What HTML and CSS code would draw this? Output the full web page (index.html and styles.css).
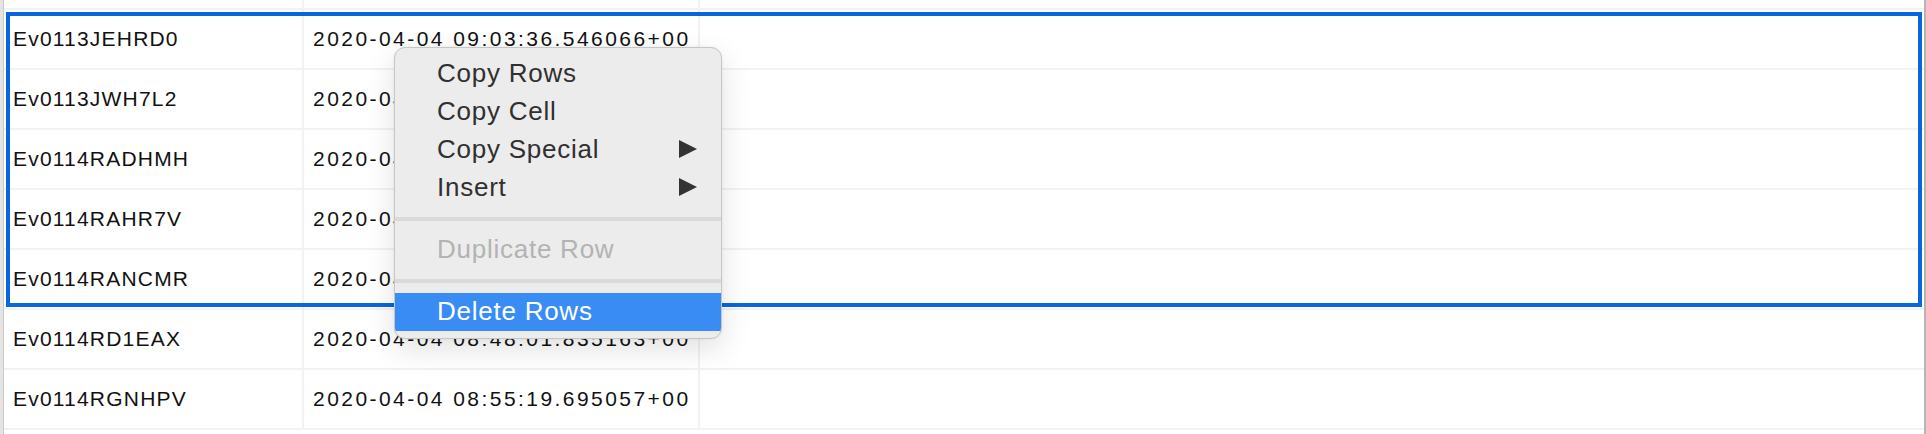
FILE: index.html
```
<!DOCTYPE html>
<html>
<head>
<meta charset="utf-8">
<link rel="stylesheet" href="styles.css">
</head>
<body>
<div class="page">
  <div class="edge"></div>
  <div class="grid">
    <div class="row stub"><div class="cell c1"></div><div class="cell c2"></div><div class="cell c3"></div></div>
    <div class="row"><div class="cell c1">Ev0113JEHRD0</div><div class="cell c2">2020-04-04 09:03:36.546066+00</div><div class="cell c3"></div></div>
    <div class="row"><div class="cell c1">Ev0113JWH7L2</div><div class="cell c2">2020-04-04 09:03:36.546066+00</div><div class="cell c3"></div></div>
    <div class="row"><div class="cell c1">Ev0114RADHMH</div><div class="cell c2">2020-04-04 09:03:36.546066+00</div><div class="cell c3"></div></div>
    <div class="row"><div class="cell c1">Ev0114RAHR7V</div><div class="cell c2">2020-04-04 09:03:36.546066+00</div><div class="cell c3"></div></div>
    <div class="row"><div class="cell c1">Ev0114RANCMR</div><div class="cell c2">2020-04-04 09:03:36.546066+00</div><div class="cell c3"></div></div>
    <div class="row"><div class="cell c1">Ev0114RD1EAX</div><div class="cell c2">2020-04-04 08:48:01.835163+00</div><div class="cell c3"></div></div>
    <div class="row"><div class="cell c1">Ev0114RGNHPV</div><div class="cell c2">2020-04-04 08:55:19.695057+00</div><div class="cell c3"></div></div>
  </div>
  <div class="scrollline"></div>
  <div class="selection"></div>
  <div class="menu">
    <div class="item">Copy Rows</div>
    <div class="item">Copy Cell</div>
    <div class="item sub">Copy Special<span class="arrow"></span></div>
    <div class="item sub">Insert<span class="arrow"></span></div>
    <div class="sep"></div>
    <div class="item disabled">Duplicate Row</div>
    <div class="sep"></div>
    <div class="item active">Delete Rows</div>
  </div>
</div>
</body>
</html>
```
FILE: styles.css
```
html, body {
  margin: 0;
  padding: 0;
  background: #ffffff;
}
.page {
  position: relative;
  width: 1926px;
  height: 434px;
  overflow: hidden;
  display: flex;
}
.edge {
  width: 3px;
  background: #e4e4e4;
  border-right: 1px solid #c9c9c9;
  flex: none;
}
.grid {
  flex: none;
  width: 1920px;
  display: flex;
  flex-direction: column;
  font-family: "Liberation Sans", Arial, sans-serif;
  font-size: 21px;
  color: #111111;
}
.scrollline {
  flex: none;
  width: 2px;
  background: #b4b4b4;
}
.row {
  display: flex;
  height: 58px;
  border-bottom: 2px solid #f2f2f2;
  flex: none;
}
.row.stub {
  height: 8px;
}
.cell {
  display: flex;
  align-items: center;
  padding-left: 9px;
  border-right: 2px solid #f2f2f2;
  white-space: nowrap;
  box-sizing: border-box;
}
.c1 {
  width: 300px;
  letter-spacing: 1.2px;
}
.c2 {
  width: 396px;
  letter-spacing: 2.45px;
}
.c3 {
  flex: 1;
  border-right: none;
}
.selection {
  position: absolute;
  left: 6px;
  top: 12px;
  width: 1908px;
  height: 287px;
  border: 4px solid #0866e1;
}
.menu {
  position: absolute;
  left: 394px;
  top: 47px;
  width: 328px;
  box-sizing: border-box;
  padding: 7px 0 7px;
  background: #ececec;
  border: 1px solid #c6c6c6;
  border-radius: 11px;
  box-shadow: 0 10px 30px rgba(0, 0, 0, 0.12), 0 0 3px rgba(0, 0, 0, 0.06);
  font-family: "Liberation Sans", Arial, sans-serif;
  font-size: 26px;
  letter-spacing: 0.75px;
  color: #303030;
  overflow: hidden;
}
.item {
  height: 38px;
  display: flex;
  align-items: center;
  padding-left: 42px;
  padding-right: 24px;
  box-sizing: border-box;
  justify-content: space-between;
  padding-bottom: 2px;
}
.item.disabled {
  color: #b3b3b3;
}
.item.active {
  background: #3a8cf5;
  color: #ffffff;
}
.arrow {
  width: 0;
  height: 0;
  border-top: 9px solid transparent;
  border-bottom: 9px solid transparent;
  border-left: 18px solid #333333;
}
.sep {
  height: 24px;
  display: flex;
  align-items: center;
}
.sep::before {
  content: "";
  display: block;
  width: 100%;
  height: 4px;
  background: #dadada;
}
```
